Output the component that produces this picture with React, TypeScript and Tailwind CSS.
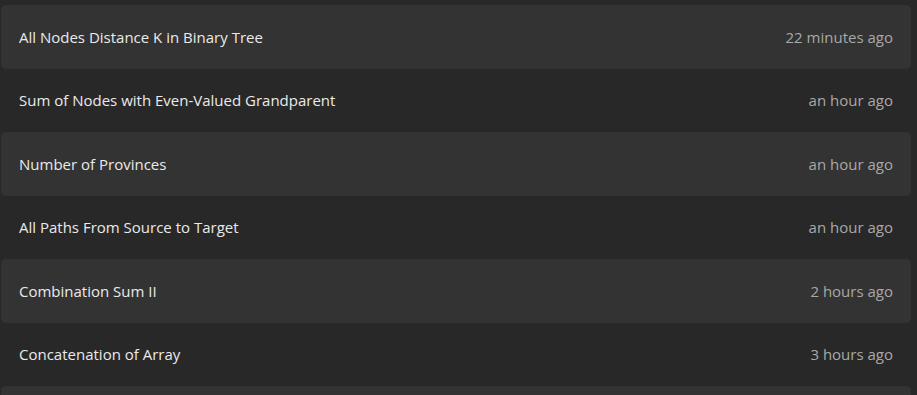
const rows = [
  { title: 'All Nodes Distance K in Binary Tree', time: '22 minutes ago' },
  { title: 'Sum of Nodes with Even-Valued Grandparent', time: 'an hour ago' },
  { title: 'Number of Provinces', time: 'an hour ago' },
  { title: 'All Paths From Source to Target', time: 'an hour ago' },
  { title: 'Combination Sum II', time: '2 hours ago' },
  { title: 'Concatenation of Array', time: '3 hours ago' },
];

export default function App() {
  return (
    <div
      className="w-[917px] h-[395px] overflow-hidden bg-[#282828] pt-[5px] pl-[1px] pr-[6px]"
      style={{ fontFamily: '"Open Sans", "Noto Sans", sans-serif' }}
    >
      {rows.map((row, idx) => (
        <div
          key={idx}
          className={`flex h-[63.5px] items-center justify-between rounded-[5px] px-[18px] ${
            idx % 2 === 0 ? 'bg-[#333333]' : 'bg-transparent'
          }`}
        >
          <span className="text-[15px] text-[#eaeaea]">{row.title}</span>
          <span className="text-[15px] text-[#a8a8a8]">{row.time}</span>
        </div>
      ))}
      {/* next row, scrolled below the fold */}
      <div className="h-[63.5px] rounded-[5px] bg-[#333333]" />
    </div>
  );
}
